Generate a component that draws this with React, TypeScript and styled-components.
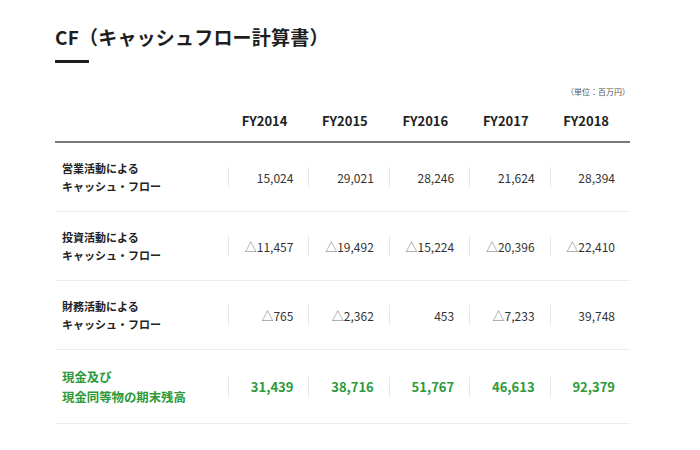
import React, { FC } from 'react';
import styled, { createGlobalStyle } from 'styled-components';

const GlobalStyle = createGlobalStyle`
  body {
    margin: 0;
    background: #fff;
    font-family: "Noto Sans CJK JP", "Noto Sans", sans-serif;
    color: #222;
  }
`;

const Page = styled.div`
  width: 575px;
  padding: 23px 70px 0 55px;
`;

const Title = styled.h2`
  margin: 0;
  font-size: 19px;
  line-height: 27px;
  font-weight: 700;
  color: #1e1e1e;
  letter-spacing: 0.2px;
`;

const TitleBar = styled.div`
  width: 34px;
  height: 3px;
  margin-top: 10px;
  background: #1e1e1e;
`;

const Unit = styled.div`
  margin-top: 23px;
  text-align: right;
  font-size: 8px;
  line-height: 12px;
  color: #555;
`;

const Row = styled.div<{ $head?: boolean; $tall?: boolean }>`
  display: grid;
  grid-template-columns: 173px repeat(5, 1fr);
  align-items: center;
  height: ${(p) => (p.$head ? '29px' : p.$tall ? '73px' : '68px')};
  padding-top: ${(p) => (p.$head ? '14px' : '0')};
  border-bottom: ${(p) => (p.$head ? '2px solid #7a7a7a' : '1px solid #ececec')};
  box-sizing: content-box;
`;

const HeadCell = styled.div`
  align-self: start;
  text-align: right;
  padding-right: 21px;
  font-size: 13px;
  line-height: 18px;
  font-weight: 700;
  color: #222;
`;

const Label = styled.div<{ $total?: boolean }>`
  padding-left: 7px;
  font-size: ${(p) => (p.$total ? '12.4px' : '11px')};
  line-height: ${(p) => (p.$total ? '20px' : '18px')};
  font-weight: 700;
  color: ${(p) => (p.$total ? '#2c9a3a' : '#222')};
  white-space: pre-line;
`;

const Value = styled.div<{ $total?: boolean }>`
  display: flex;
  align-items: center;
  justify-content: flex-end;
  height: 20px;
  padding-right: 15px;
  border-left: 1px solid #e6e6e6;
  font-size: ${(p) => (p.$total ? '13px' : '12px')};
  font-weight: ${(p) => (p.$total ? 700 : 400)};
  color: ${(p) => (p.$total ? '#2c9a3a' : '#333')};
`;

const Tri = styled.span`
  color: #777;
  font-weight: 400;
`;

const years = ['FY2014', 'FY2015', 'FY2016', 'FY2017', 'FY2018'];

const rows = [
  { label: '営業活動による\nキャッシュ・フロー', values: ['15,024', '29,021', '28,246', '21,624', '28,394'] },
  { label: '投資活動による\nキャッシュ・フロー', values: ['△11,457', '△19,492', '△15,224', '△20,396', '△22,410'] },
  { label: '財務活動による\nキャッシュ・フロー', values: ['△765', '△2,362', '453', '△7,233', '39,748'] },
  { label: '現金及び\n現金同等物の期末残高', values: ['31,439', '38,716', '51,767', '46,613', '92,379'], total: true },
];

const Num: FC<{ v: string }> = ({ v }) =>
  v.startsWith('△') ? (
    <>
      <Tri>△</Tri>
      {v.slice(1)}
    </>
  ) : (
    <>{v}</>
  );

const App: FC = () => (
  <>
    <GlobalStyle />
    <Page>
      <Title>CF（キャッシュフロー計算書）</Title>
      <TitleBar />
      <Unit>（単位：百万円）</Unit>
      <Row $head>
        <div />
        {years.map((y) => (
          <HeadCell key={y}>{y}</HeadCell>
        ))}
      </Row>
      {rows.map((r) => (
        <Row key={r.label} $tall={r.total}>
          <Label $total={r.total}>{r.label}</Label>
          {r.values.map((v, i) => (
            <Value key={i} $total={r.total}>
              <Num v={v} />
            </Value>
          ))}
        </Row>
      ))}
    </Page>
  </>
);

export default App;
